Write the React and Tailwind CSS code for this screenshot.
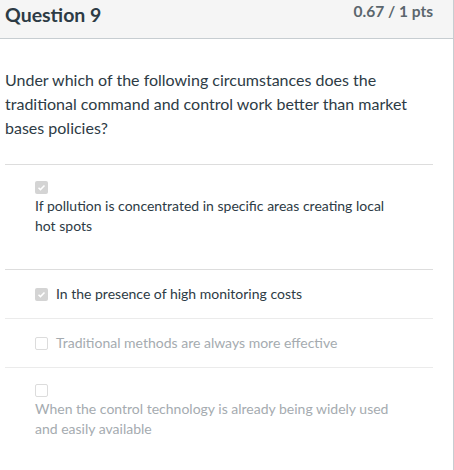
const ANSWERS = [
  { text: 'If pollution is concentrated in specific areas creating local hot spots', checked: true, stacked: true },
  { text: 'In the presence of high monitoring costs', checked: true },
  { text: 'Traditional methods are always more effective', checked: false },
  { text: 'When the control technology is already being widely used and easily available', checked: false, stacked: true },
]

function Box({ checked }) {
  if (checked) {
    return (
      <span className="flex items-center justify-center w-[13px] h-[13px] rounded-[2px] bg-[#d4d4d4] shrink-0">
        <svg viewBox="0 0 12 12" className="w-[9px] h-[9px]">
          <path d="M2 6.3l2.6 2.5L10 3.2" fill="none" stroke="#fff" strokeWidth="2" />
        </svg>
      </span>
    )
  }
  return <span className="block w-[13px] h-[13px] rounded-[2px] border border-[#dcdcdc] bg-white shrink-0" />
}

export default function App() {
  return (
    <div
      className="w-[454px] h-[470px] bg-white border-r border-[#c7cdd1] overflow-hidden"
      style={{ fontFamily: 'Lato, "Open Sans", sans-serif' }}
    >
      {/* Header */}
      <div className="h-[39px] bg-[#f5f5f5] border-b border-[#c7cdd1] flex justify-between pl-[5px] pr-[20px]">
        <h2 className="text-[19.5px] font-bold text-[#2d3b45] leading-none pt-[5px]">Question 9</h2>
        <div className="text-[15.5px] font-bold text-[#5b666d] leading-none pt-[4px]">0.67 / 1 pts</div>
      </div>

      <div className="pl-[5px] pr-[20px]">
        <p className="pt-[29px] pb-[24px] text-[16px] leading-[24px] text-[#2d3b45] border-b border-[#dddddd]">
          Under which of the following circumstances does the traditional command and control work better than
          market bases policies?
        </p>

        {ANSWERS.map((a, i) => (
          <div
            key={i}
            className={`pl-[30px] text-[14px] leading-[20px] border-b ${
              i === 0 ? 'border-[#dddddd]' : 'border-[#ebebeb]'
            } ${i === ANSWERS.length - 1 ? 'border-transparent' : ''} ${a.checked ? 'text-[#2d3b45]' : 'text-[#a5abb0]'} ${
              a.stacked ? 'pt-[16px] pb-[33px]' : 'py-[14px]'
            }`}
          >
            {a.stacked ? (
              <div>
                <Box checked={a.checked} />
                <div className="pt-[2px] pr-[40px]">{a.text}</div>
              </div>
            ) : (
              <div className="flex items-center gap-[8px]">
                <Box checked={a.checked} />
                <span>{a.text}</span>
              </div>
            )}
          </div>
        ))}
      </div>
    </div>
  )
}
